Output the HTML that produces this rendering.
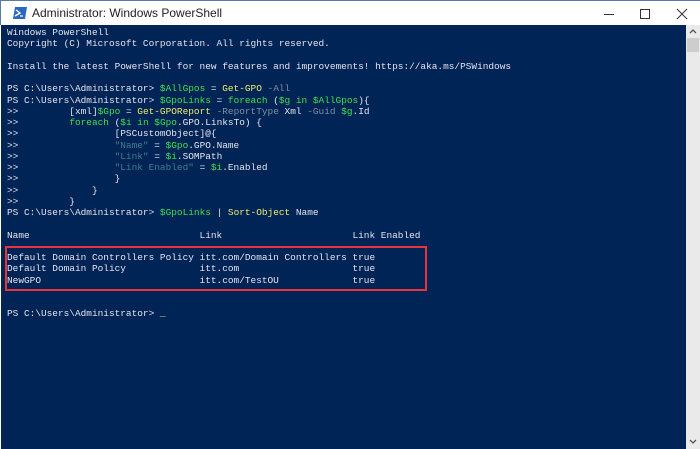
<!DOCTYPE html>
<html><head><style>
*{margin:0;padding:0;box-sizing:border-box}
body{width:700px;height:449px;overflow:hidden;background:#fff;position:relative;font-family:"Liberation Sans",sans-serif}
#title{position:absolute;left:0;top:0;width:700px;height:25px;background:#fff;border-top:1px solid #5a7aa0;border-left:1px solid #5a7aa0}
#title .t{position:absolute;left:31px;top:5px;font-size:12px;color:#222}
#con{position:absolute;left:1px;top:25px;width:685px;height:424px;background:#012456}
#sb{position:absolute;left:686px;top:25px;width:14px;height:424px;background:#eaeaea}
#sb .th{position:absolute;left:1px;top:13px;width:12px;height:14px;background:#cdcdcd}
pre{position:absolute;left:7px;top:27px;font-family:"Liberation Mono",monospace;font-size:9.45px;line-height:11.25px;color:#e4e4ec}
.y{color:#eded6a}.g{color:#3ee04a}.p{color:#7f8ea0}.s{color:#3f7e8c}
#box{position:absolute;left:5px;top:246px;width:422px;height:45px;border:2px solid #e8333c}
</style></head><body>
<div id="title">
<svg style="position:absolute;left:12px;top:6px" width="14" height="12" viewBox="0 0 14 12"><path d="M2 0H14L12 12H0Z" fill="#2a67c0"/><path d="M3 3L7 6L2 9" stroke="#fff" stroke-width="1.4" fill="none"/><path d="M7 9H10" stroke="#fff" stroke-width="1.2"/></svg>
<span class="t">Administrator: Windows PowerShell</span>
<svg style="position:absolute;left:600px;top:7px" width="90" height="12"><path d="M3 6.5H13" stroke="#333" stroke-width="1"/><rect x="39.5" y="1.5" width="9" height="9" fill="none" stroke="#333"/><path d="M76 1L86 11M86 1L76 11" stroke="#333"/></svg>
</div>
<div id="con"></div>
<div id="sb"><svg style="position:absolute;left:3px;top:3px" width="8" height="6"><path d="M1 5L4 2L7 5" stroke="#555" stroke-width="1.3" fill="none"/></svg><div class="th"></div><svg style="position:absolute;left:3px;top:414px" width="8" height="6"><path d="M1 1L4 4L7 1" stroke="#555" stroke-width="1.3" fill="none"/></svg></div>
<pre>Windows PowerShell
Copyright (C) Microsoft Corporation. All rights reserved.

Install the latest PowerShell for new features and improvements! https://aka.ms/PSWindows

PS C:\Users\Administrator&gt; <span class="g">$AllGpos</span> = <span class="y">Get-GPO</span> <span class="p">-All</span>
PS C:\Users\Administrator&gt; <span class="g">$GpoLinks</span> = <span class="g">foreach</span> (<span class="g">$g</span> <span class="g">in</span> <span class="g">$AllGpos</span>){
&gt;&gt;         [xml]<span class="g">$Gpo</span> = <span class="y">Get-GPOReport</span> <span class="p">-ReportType</span> Xml <span class="p">-Guid</span> <span class="g">$g</span>.Id
&gt;&gt;         <span class="g">foreach</span> (<span class="g">$i</span> <span class="g">in</span> <span class="g">$Gpo</span>.GPO.LinksTo) {
&gt;&gt;                 [PSCustomObject]@{
&gt;&gt;                 <span class="s">"Name"</span> = <span class="g">$Gpo</span>.GPO.Name
&gt;&gt;                 <span class="s">"Link"</span> = <span class="g">$i</span>.SOMPath
&gt;&gt;                 <span class="s">"Link Enabled"</span> = <span class="g">$i</span>.Enabled
&gt;&gt;                 }
&gt;&gt;             }
&gt;&gt;         }
PS C:\Users\Administrator&gt; <span class="g">$GpoLinks</span> | <span class="y">Sort-Object</span> Name

Name                              Link                       Link Enabled

Default Domain Controllers Policy itt.com/Domain Controllers true
Default Domain Policy             itt.com                    true
NewGPO                            itt.com/TestOU             true


PS C:\Users\Administrator&gt; <span class="y">_</span></pre>
<div id="box"></div>
</body></html>
